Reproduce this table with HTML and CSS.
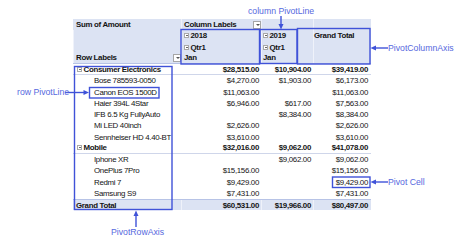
FILE: index.html
```html
<!DOCTYPE html>
<html>
<head>
<meta charset="utf-8">
<link rel="stylesheet" href="styles.css">
</head>
<body>
<div class="stage">
  <div class="pivot">
    <!-- header row 1 -->
    <div class="c h b l">Sum of Amount</div>
    <div class="c h b l dd">Column Labels<span class="drop"></span></div>
    <div class="c h"></div>
    <div class="c h"></div>
    <!-- header row 2 -->
    <div class="c h"></div>
    <div class="c h b l2"><span class="mn"></span>2018</div>
    <div class="c h b l3"><span class="mn"></span>2019</div>
    <div class="c h b l4">Grand Total</div>
    <!-- header row 3 -->
    <div class="c h"></div>
    <div class="c h b l2"><span class="mn"></span>Qtr1</div>
    <div class="c h b l3"><span class="mn"></span>Qtr1</div>
    <div class="c h"></div>
    <!-- header row 4 -->
    <div class="c h b l dd hl">Row Labels<span class="drop"></span></div>
    <div class="c h b l2 hl">Jan</div>
    <div class="c h b l3 hl">Jan</div>
    <div class="c h hl"></div>

    <div class="c b grp g"><span class="mn"></span>Consumer Electronics</div>
    <div class="c b r g">$28,515.00</div>
    <div class="c b r g">$10,904.00</div>
    <div class="c b r r4 g">$39,419.00</div>

    <div class="c ch">Bose 785593-0050</div>
    <div class="c r">$4,270.00</div>
    <div class="c r">$1,903.00</div>
    <div class="c r r4">$6,173.00</div>

    <div class="c ch">Canon EOS 1500D</div>
    <div class="c r">$11,063.00</div>
    <div class="c r"></div>
    <div class="c r r4">$11,063.00</div>

    <div class="c ch">Haier 394L 4Star</div>
    <div class="c r">$6,946.00</div>
    <div class="c r">$617.00</div>
    <div class="c r r4">$7,563.00</div>

    <div class="c ch">IFB 6.5 Kg FullyAuto</div>
    <div class="c r"></div>
    <div class="c r">$8,384.00</div>
    <div class="c r r4">$8,384.00</div>

    <div class="c ch">Mi LED 40inch</div>
    <div class="c r">$2,626.00</div>
    <div class="c r"></div>
    <div class="c r r4">$2,626.00</div>

    <div class="c ch">Sennheiser HD 4.40-BT</div>
    <div class="c r">$3,610.00</div>
    <div class="c r"></div>
    <div class="c r r4">$3,610.00</div>

    <div class="c b grp g"><span class="mn"></span>Mobile</div>
    <div class="c b r g">$32,016.00</div>
    <div class="c b r g">$9,062.00</div>
    <div class="c b r r4 g">$41,078.00</div>

    <div class="c ch">Iphone XR</div>
    <div class="c r"></div>
    <div class="c r">$9,062.00</div>
    <div class="c r r4">$9,062.00</div>

    <div class="c ch">OnePlus 7Pro</div>
    <div class="c r">$15,156.00</div>
    <div class="c r"></div>
    <div class="c r r4">$15,156.00</div>

    <div class="c ch">Redmi 7</div>
    <div class="c r">$9,429.00</div>
    <div class="c r"></div>
    <div class="c r r4">$9,429.00</div>

    <div class="c ch">Samsung S9</div>
    <div class="c r">$7,431.00</div>
    <div class="c r"></div>
    <div class="c r r4">$7,431.00</div>

    <div class="c h b l tot">Grand Total</div>
    <div class="c h b r tot">$60,531.00</div>
    <div class="c h b r tot">$19,966.00</div>
    <div class="c h b r r4 tot">$80,497.00</div>
  </div>

  <svg class="marks" width="474" height="248" viewBox="0 0 474 248">
    <g fill="none" stroke="#3f52d8" stroke-width="1.4">
      <rect x="181" y="29.5" width="78.5" height="34.5"/>
      <rect x="260" y="29.5" width="37" height="34"/>
      <rect x="297.5" y="28.5" width="72.5" height="35.5"/>
      <rect x="74.5" y="66.5" width="97.5" height="143"/>
      <rect x="89.5" y="87.5" width="69.5" height="10.5"/>
      <rect x="332.5" y="177" width="37.5" height="10.5"/>
      <line x1="65" y1="92.5" x2="85" y2="92.5"/>
      <line x1="281" y1="16" x2="281" y2="26"/>
      <line x1="373" y1="48" x2="388" y2="48"/>
      <line x1="373" y1="182" x2="388" y2="182"/>
      <line x1="136" y1="214" x2="136" y2="227"/>
    </g>
    <g fill="#3f52d8">
      <polygon points="89,92.5 83.5,90 83.5,95"/>
      <polygon points="281,29.5 278.5,24 283.5,24"/>
      <polygon points="370.5,48 376,45.5 376,50.5"/>
      <polygon points="370.5,182 376,179.5 376,184.5"/>
      <polygon points="136,210.5 133.5,216 138.5,216"/>
    </g>
  </svg>
  <span class="note n-col">column PivotLine</span>
  <span class="note n-caxis">PivotColumnAxis</span>
  <span class="note n-row">row PivotLine</span>
  <span class="note n-raxis">PivotRowAxis</span>
  <span class="note n-cell">Pivot Cell</span>
</div>
</body>
</html>
```
FILE: styles.css
```css
html, body {
  margin: 0;
  padding: 0;
  background: #ffffff;
}

.stage {
  position: relative;
  width: 474px;
  height: 248px;
  box-sizing: border-box;
  padding: 19px 0 0 73px;
  font-family: "Liberation Sans", Arial, sans-serif;
  overflow: hidden;
}

.pivot {
  display: grid;
  grid-template-columns: 108px 80px 52px 58px;
  grid-auto-rows: 11.25px;
  font-size: 7.9px;
  letter-spacing: -0.32px;
  color: #141414;
}

.c {
  box-sizing: border-box;
  line-height: 11.25px;
  white-space: nowrap;
  overflow: hidden;
  display: flex;
  align-items: center;
}

.h {
  background: #dce3f3;
}

.b {
  font-weight: bold;
}

.l { padding-left: 3px; }
.l2 { padding-left: 3px; }
.l3 { padding-left: 2px; }
.l4 { padding-left: 1px; }

.dd {
  justify-content: space-between;
  padding-right: 0;
}

.hl {
  border-bottom: 1px solid #b7c3e6;
}

.grp {
  padding-left: 4px;
}

.g {
  border-bottom: 1px solid #cfd6ea;
}

.ch {
  padding-left: 21px;
}

.r {
  justify-content: flex-end;
  padding-right: 2px;
}

.r4 {
  padding-right: 3px;
}

.tot {
  border-top: 1px solid #b7c3e6;
}

.pivot .tot + .tot,
.pivot .h + .h {
  box-shadow: inset 1px 0 0 rgba(255, 255, 255, 0.55);
}

.mn {
  display: inline-block;
  position: relative;
  width: 5px;
  height: 5px;
  box-sizing: border-box;
  border: 1px solid #a9a9a9;
  background: #fff;
  margin-right: 1.5px;
  flex: none;
}

.mn::after {
  content: "";
  position: absolute;
  left: 0.5px;
  right: 0.5px;
  top: 1px;
  height: 1px;
  background: #666;
}

.drop {
  position: relative;
  width: 8px;
  height: 8px;
  box-sizing: border-box;
  border: 1px solid #a6a6a6;
  background: #fff;
  flex: none;
}

.drop::after {
  content: "";
  position: absolute;
  left: 1.5px;
  top: 2.5px;
  border-left: 2px solid transparent;
  border-right: 2px solid transparent;
  border-top: 2px solid #555;
}

.marks {
  position: absolute;
  left: 0;
  top: 0;
  pointer-events: none;
}

.note {
  position: absolute;
  font-family: "Liberation Sans", Arial, sans-serif;
  font-size: 8.7px;
  line-height: 10px;
  color: #5668de;
  white-space: nowrap;
}

.n-col { left: 248px; top: 6px; }
.n-caxis { left: 388px; top: 43px; }
.n-row { left: 17px; top: 87px; }
.n-raxis { left: 111px; top: 227px; }
.n-cell { left: 388px; top: 177px; }
```
